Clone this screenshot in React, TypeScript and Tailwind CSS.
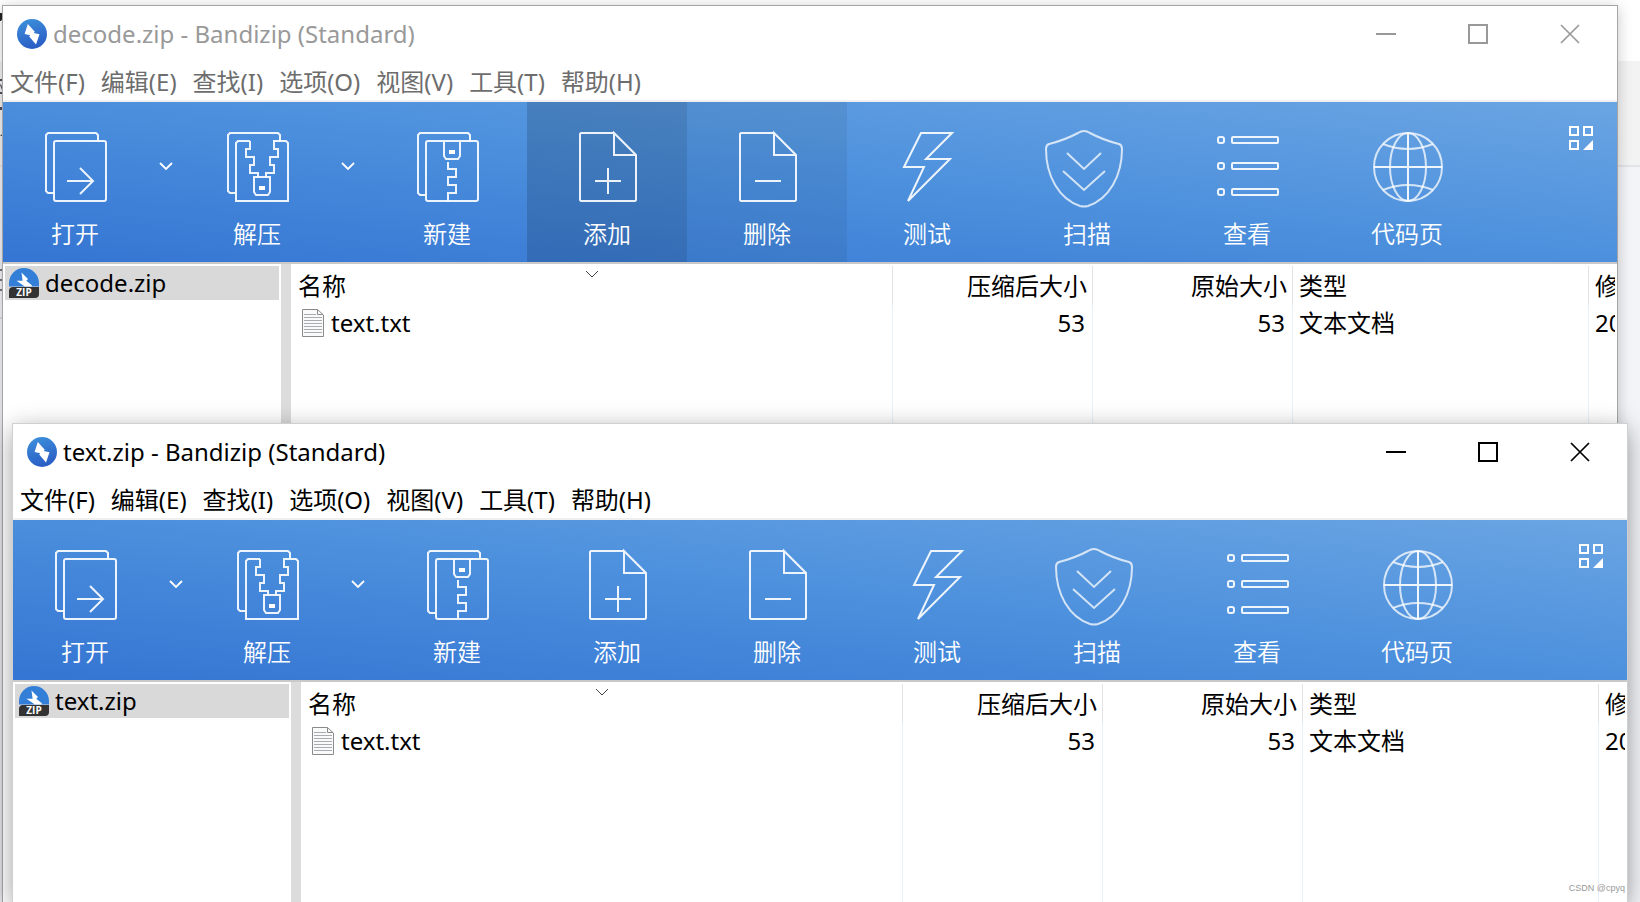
import type { ReactNode } from "react";

const fontCls = "font-['Noto_Sans','Noto_Sans_CJK_SC',sans-serif]";

const menus = ["文件(F)", "编辑(E)", "查找(I)", "选项(O)", "视图(V)", "工具(T)", "帮助(H)"];

function AppLogo() {
  return (
    <svg className="size-[30px] shrink-0" viewBox="0 0 30 30" aria-hidden="true">
      <defs>
        <linearGradient id="logo" x1="0" y1="0" x2="0.3" y2="1">
          <stop offset="0" stopColor="#3d93dc" />
          <stop offset="1" stopColor="#2b5fc6" />
        </linearGradient>
      </defs>
      <circle cx="15" cy="15" r="15" fill="url(#logo)" />
      <path d="M10.800 5 L17.800 12.800 L16.800 14 L22.500 15.200 L19 25.500 L12.200 17.400 L13.200 16.200 L7.600 15 Z" fill="#fff" />
    </svg>
  );
}

function ZipIcon() {
  return (
    <svg className="size-[30px] shrink-0" viewBox="0 0 30 30" aria-hidden="true">
      <path d="M0 18.500 V15 A15 15 0 0 1 30 15 V18.500 Z" fill="#337fd8" />
      <path d="M12.500 4.500 L19 11 L17.300 12.800 L22.800 17.200 V18.500 H15.800 L7.500 12.800 H13.600 Z" fill="#fff" />
      <path d="M4 19 H30 V26 Q30 30 26 30 H0 V23 Q0 19 4 19 Z" fill="#333" />
      <text x="15" y="28" textAnchor="middle" fontSize="10" fontWeight="700" fill="#fff" fontFamily="Open Sans, sans-serif">ZIP</text>
    </svg>
  );
}

function FileIcon() {
  return (
    <svg className="h-7 w-[22px] shrink-0" viewBox="0 0 22 28" fill="none" aria-hidden="true">
      <path d="M0.500 0.500 H15.500 L21.500 6 V27.500 H0.500 Z" fill="#fafafa" stroke="#8a8a8a" />
      <path d="M15.500 0.500 V5.500 H21" stroke="#8a8a8a" />
      <path d="M2 5.500 H14 M2 8.500 H20 M2 11.500 H20 M2 14.500 H20 M2 17.500 H20 M2 20.500 H20 M2 23.500 H20" stroke="#a8acb0" />
    </svg>
  );
}

const icons: Record<string, ReactNode> = {
  open: (
    <>
      <path d="M63 15 V9 L61 7 H13 L11 9 V65 L13 67 H19" />
      <rect x="19" y="15" width="52" height="60" rx="2" />
      <path d="M32 55 H58 M45 42 L58 55 L45 68" />
    </>
  ),
  extract: (
    <>
      <path d="M63 15 V9 L61 7 H13 L11 9 V65 L13 67 H19" />
      <path d="M33 15 H21 L19 17 V75 H71 V17 L69 15 H57 V23 H61 V31 H53 V39 H57 V47 H49 V51" />
      <path d="M33 15 V23 H29 V31 H37 V39 H33 V47 H41 V51" />
      <path d="M37 51 H53 V66 L51 69 H39 L37 66 Z" />
      <rect x="42" y="60" width="6" height="4" fill="currentColor" stroke="none" />
    </>
  ),
  create: (
    <>
      <path d="M63 15 V9 L61 7 H13 L11 9 V67 L13 69 H19" />
      <rect x="19" y="15" width="52" height="60" rx="2" />
      <path d="M37 15 V30 L39 33 H51 L53 30 V15" />
      <rect x="42" y="24" width="6" height="4" fill="currentColor" stroke="none" />
      <path d="M41 36 V43 H49 V51 H41 V59 H49 V67 H41 V75" />
    </>
  ),
  add: (
    <>
      <path d="M47 7 H14 L13 8 V74 L14 75 H68 L69 74 V29 L47 7 V29 H69" />
      <path d="M28 55 H54 M41 42 V68" />
    </>
  ),
  remove: (
    <>
      <path d="M47 7 H14 L13 8 V74 L14 75 H68 L69 74 V29 L47 7 V29 H69" />
      <path d="M28 55 H54" />
    </>
  ),
  test: <path d="M34 7 H65 L39 33 H63 L21 75 L37 41 H17 Z" />,
  scan: (
    <g strokeOpacity="0.75">
      <path d="M37 5 Q40 5 43 7 Q56 14 72 18 Q75 19 75 23 C75 50 62 73 41 80 Q37 81 33 80 C12 73 -1 50 -1 23 Q-1 19 2 18 Q18 14 31 7 Q34 5 37 5 Z" />
      <path d="M20 27 L37 43 L54 27 M16 45 L37 64 L58 45" />
    </g>
  ),
  view: (
    <>
      {[11, 37, 63].map((y) => (
        <g key={y}>
          <rect x="11" y={y} width="6" height="6" rx="2" />
          <rect x="25" y={y} width="46" height="6" rx="1" />
        </g>
      ))}
    </>
  ),
  codepage: (
    <>
      <g strokeOpacity="0.75">
        <circle cx="41" cy="41" r="34" />
        <ellipse cx="41" cy="41" rx="18" ry="34" />
        <path d="M16 18 Q41 28 66 18 M16 64 Q41 54 66 64" />
      </g>
      <path d="M41 7 V75 M7 41 H75" />
    </>
  ),
};

type Tool = { id: string; label: string; split?: boolean };

const tools: Tool[] = [
  { id: "open", label: "打开", split: true },
  { id: "extract", label: "解压", split: true },
  { id: "create", label: "新建" },
  { id: "add", label: "添加" },
  { id: "remove", label: "删除" },
  { id: "test", label: "测试" },
  { id: "scan", label: "扫描" },
  { id: "view", label: "查看" },
  { id: "codepage", label: "代码页" },
];

function ToolButton({ tool, shade }: { tool: Tool; shade: string }) {
  return (
    <div className="flex shrink-0">
      <button type="button" className={`flex h-40 flex-col items-center pt-6 ${tool.split ? "w-36" : "w-40"} ${shade}`}>
        <svg className="size-20 overflow-visible" viewBox="0 0 80 80" fill="none" stroke="currentColor" strokeWidth="2" strokeOpacity="0.9" aria-hidden="true">
          {icons[tool.id]}
        </svg>
        <span className="mt-3 leading-8 font-[350]">{tool.label}</span>
      </button>
      {tool.split && (
        <button type="button" aria-label={`${tool.label} ▾`} className="flex w-[38px] justify-center pt-[60px]">
          <svg className="h-2 w-[14px]" viewBox="0 0 14 8" fill="none" stroke="currentColor" strokeWidth="1.800">
            <path d="M1 1 L7 7 L13 1" />
          </svg>
        </button>
      )}
    </div>
  );
}

function Toolbar({ hover }: { hover?: boolean }) {
  const shadeOf = (id: string) => {
    if (!hover) return "";
    if (id === "add") return "bg-black/15";
    if (id === "remove") return "bg-black/6";
    return "";
  };
  return (
    <div className="flex items-start bg-[linear-gradient(6deg,#3575d3_0%,#4a8edc_48%,#6aa5e3_100%)] text-white">
      {tools.map((t) => (
        <ToolButton key={t.id} tool={t} shade={shadeOf(t.id)} />
      ))}
      <button type="button" aria-label="布局" className="mt-6 mr-6 ml-auto">
        <svg className="size-6" viewBox="0 0 24 24" fill="none" stroke="currentColor" strokeWidth="2">
          <path d="M1 1 H9 V9 H1 Z M15 1 H23 V9 H15 Z M1 15 H9 V23 H1 Z" />
          <path d="M24 14 V24 H14 Z" fill="currentColor" stroke="none" />
        </svg>
      </button>
    </div>
  );
}

function CaptionButton({ label, children }: { label: string; children: ReactNode }) {
  return (
    <button type="button" aria-label={label} className="flex h-14 w-[92px] items-center justify-center">
      <svg className="size-5" viewBox="0 0 20 20" fill="none" stroke="currentColor" strokeWidth="2">
        {children}
      </svg>
    </button>
  );
}

const lineCls = "border-r border-[#e8f1fb]";
const headCls = "border-r border-[#e3e3e3] font-normal";

function FileTable() {
  return (
    <div className="flex min-w-0 flex-1 flex-col overflow-hidden pt-[2px] pr-[2px]">
      <table className="h-full w-full table-fixed border-separate border-spacing-0 whitespace-nowrap">
        <colgroup>
          <col className="w-[602px]" />
          <col className="w-[200px]" />
          <col className="w-[200px]" />
          <col className="w-[296px]" />
          <col />
        </colgroup>
        <thead>
          <tr className="h-[39px]">
            <th className={`relative pl-[7px] text-left ${headCls}`}>
              名称
              <svg className="absolute top-1 left-1/2 h-2 w-[14px] -translate-x-1/2" viewBox="0 0 14 8" fill="none" stroke="#444" aria-hidden="true">
                <path d="M1 1 L7 7 L13 1" />
              </svg>
            </th>
            <th className={`pr-[5px] text-right ${headCls}`}>压缩后大小</th>
            <th className={`pr-[5px] text-right ${headCls}`}>原始大小</th>
            <th className={`pl-[6px] text-left ${headCls}`}>类型</th>
            <th className="overflow-hidden pl-[6px] text-left font-normal">修</th>
          </tr>
        </thead>
        <tbody>
          <tr className="h-9">
            <td className={`pl-[11px] ${lineCls}`}>
              <span className="flex items-center gap-[7px]"><FileIcon />text.txt</span>
            </td>
            <td className={`pr-[7px] text-right ${lineCls}`}>53</td>
            <td className={`pr-[7px] text-right ${lineCls}`}>53</td>
            <td className={`pl-[6px] ${lineCls}`}>文本文档</td>
            <td className="overflow-hidden pl-[6px]">20</td>
          </tr>
          <tr>
            <td className={lineCls} />
            <td className={lineCls} />
            <td className={lineCls} />
            <td className={lineCls} />
            <td />
          </tr>
        </tbody>
      </table>
    </div>
  );
}

function ZipWindow({ file, active, className }: { file: string; active?: boolean; className: string }) {
  return (
    <section className={`absolute bottom-0 flex flex-col bg-white ${className}`}>
      <header className={`flex h-14 items-center pl-[14px] ${active ? "text-black" : "text-[#999]"}`}>
        <AppLogo />
        <h1 className="ml-[6px]">{file} - Bandizip (Standard)</h1>
        <div className="mr-px ml-auto flex">
          <CaptionButton label="最小化"><path d="M0 10 H20" /></CaptionButton>
          <CaptionButton label="最大化"><path d="M1 1 H19 V19 H1 Z" /></CaptionButton>
          <CaptionButton label="关闭"><path d="M1 1 L19 19 M19 1 L1 19" strokeWidth="1.700" /></CaptionButton>
        </div>
      </header>
      <nav className={`flex h-10 items-center gap-4 border-b-2 border-[#f0f0f0] pt-[2px] pl-[7px] ${active ? "text-black" : "text-[#6d6d6d]"}`}>
        {menus.map((m) => (
          <button key={m} type="button">{m}</button>
        ))}
      </nav>
      <Toolbar hover={!active} />
      <div className="flex min-h-0 flex-1 border-t-2 border-[#c9c9c9] text-black">
        <aside className="w-[278px] shrink-0 p-[2px]">
          <button type="button" className="flex h-[34px] w-[274px] items-center gap-[6px] bg-[#d9d9d9] pl-1">
            <ZipIcon />
            {file}
          </button>
        </aside>
        <div className="w-[10px] shrink-0 bg-[#dcdcdc]" />
        <FileTable />
      </div>
    </section>
  );
}

// The page behind both windows; only slivers of it stay visible at the edges.
function Backdrop() {
  return (
    <div>
      <div className="h-[61px] bg-white" />
      <div className="h-[106px] border-b-2 border-[#e3e4e8] bg-[#f3f3f3]" />
      <svg className="absolute top-0 left-0 h-[340px] w-[3px]" viewBox="0 0 3 340" aria-hidden="true">
        <path d="M0 13 H3 V18 L1 21 H0 Z" fill="#222" />
        <path d="M0 79 H3 V81 H0 Z M1 84 L3 90 H2 L0 85 Z M0 92 H3 V94 H0 Z M0 107 H3 V110 H0 Z M0 136 L3 133 V136 Z" fill="#4f4f5c" />
        <path d="M0 269 H3 V271 H0 Z M0 279 H3 V281 H0 Z M0 289 H3 V291 H0 Z" fill="#77777f" />
        <path d="M0 317 H3 V319 H0 Z" fill="#dedfe3" />
      </svg>
    </div>
  );
}

export default function App() {
  return (
    <main className={`relative h-screen overflow-hidden bg-[#f3f4f8] text-2xl leading-8 ${fontCls}`}>
      <Backdrop />
      <ZipWindow file="decode.zip" className="top-[6px] right-[23px] left-[3px] shadow-[0_0_0_1px_#a5a5a5,0_2px_14px_rgba(0,0,0,0.25)]" />
      <ZipWindow file="text.zip" active className="top-[424px] right-[13px] left-[13px] shadow-[0_0_0_1px_#d0d0d0,0_6px_24px_rgba(0,0,0,0.4)]" />
      <p className="absolute right-[15px] bottom-2 font-['Liberation_Sans',sans-serif] text-[9px] leading-3 text-[#999]">CSDN @cpyq</p>
    </main>
  );
}
